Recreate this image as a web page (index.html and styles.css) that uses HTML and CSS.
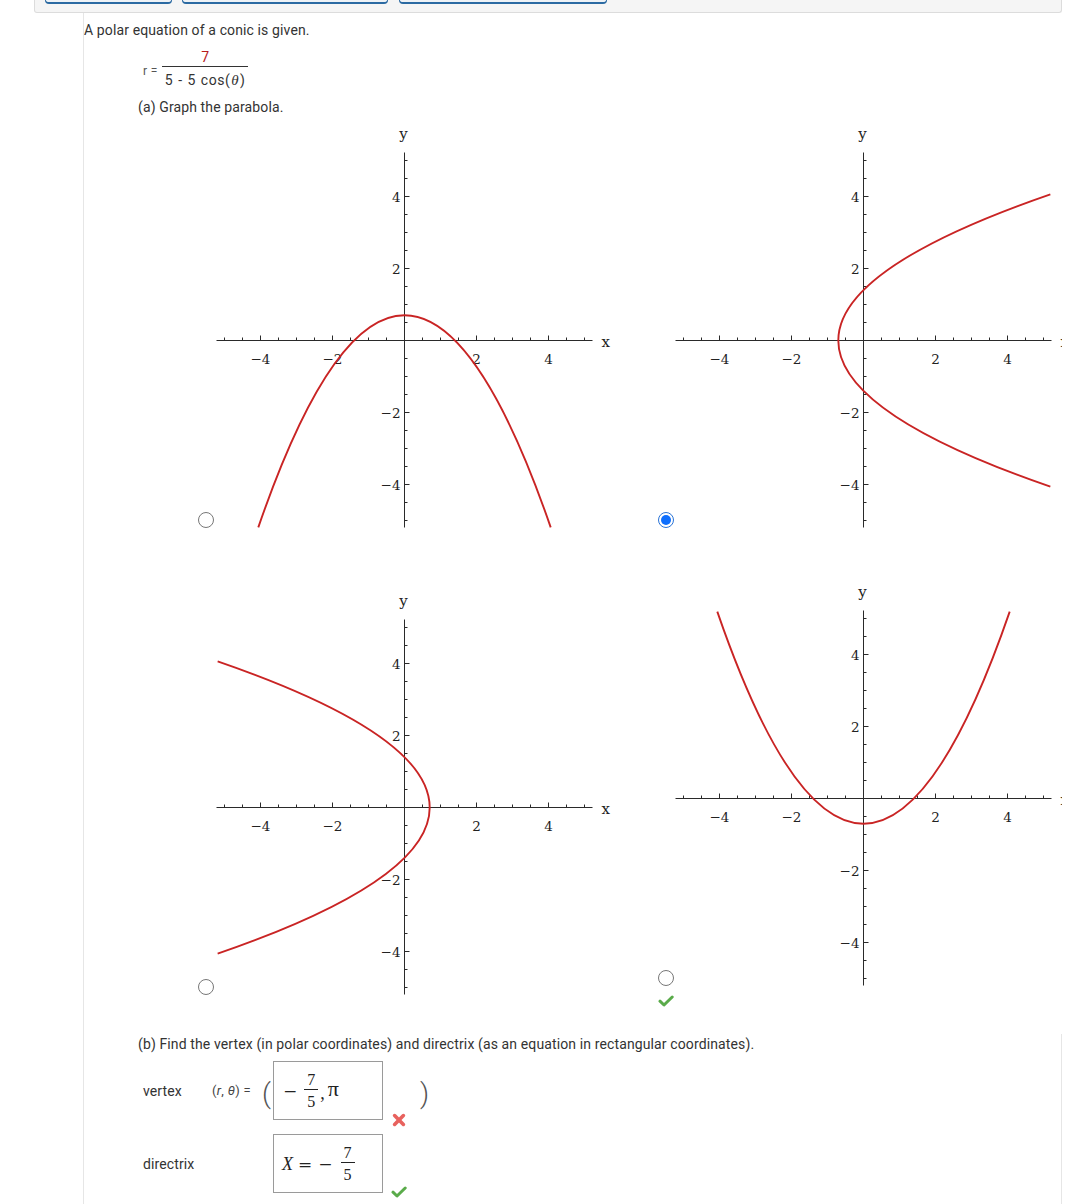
FILE: index.html
```html
<!DOCTYPE html>
<html lang="en">
<head>
<meta charset="utf-8">
<title>Polar conic</title>
<link rel="stylesheet" href="styles.css">
</head>
<body>
<div class="topbar">
  <span class="btn b1"></span><span class="btn b2"></span><span class="btn b3"></span>
</div>
<main class="question">
  <p class="intro">A polar equation of a conic is given.</p>
  <div class="formula">
    <span class="req"><i>r</i> =</span>
    <span class="frac-main"><span class="num">7</span><span class="den">5 - 5 cos(<i>θ</i>)</span></span>
  </div>
  <p class="part">(a) Graph the parabola.</p>

  <div class="graphs">
    <div class="graph-row">
      <div class="cell">
        <div class="choice">
          <span class="radio"></span>
          <svg class="plot" width="400" height="403" viewBox="0 0 400 403">
            <g transform="translate(189.5 215.5)">
              <path class="axis" d="M-188 0H188M0 -188V187"/>
              <path class="axis" d="M-180 0v-3M-162 0v-3M-144 0v-5M-126 0v-3M-108 0v-3M-90 0v-3M-72 0v-5M-54 0v-3M-36 0v-3M-18 0v-3M18 0v-3M36 0v-3M54 0v-3M72 0v-5M90 0v-3M108 0v-3M126 0v-3M144 0v-5M162 0v-3M180 0v-3"/>
              <path class="axis" d="M0 -180h3M0 -162h3M0 -144h5M0 -126h3M0 -108h3M0 -90h3M0 -72h5M0 -54h3M0 -36h3M0 -18h3M0 18h3M0 36h3M0 54h3M0 72h5M0 90h3M0 108h3M0 126h3M0 144h5M0 162h3M0 180h3"/>
              <g class="lbl">
                <text x="-144" y="23" text-anchor="middle">−4</text>
                <text x="-72" y="23" text-anchor="middle">−2</text>
                <text x="72" y="23" text-anchor="middle">2</text>
                <text x="144" y="23" text-anchor="middle">4</text>
                <text x="-4" y="-139" text-anchor="end">4</text>
                <text x="-4" y="-67" text-anchor="end">2</text>
                <text x="-4" y="77" text-anchor="end">−2</text>
                <text x="-4" y="149" text-anchor="end">−4</text>
              </g>
              <text class="axlbl" x="197" y="6">x</text>
              <text class="axlbl" x="-1" y="-202" text-anchor="middle">y</text>
              <path class="curve" d="M-146.2 186.85Q0 -237.25 146.2 186.85"/>
            </g>
          </svg>
        </div>
      </div>
      <div class="cell">
        <div class="choice">
          <span class="radio on"></span>
          <svg class="plot" width="400" height="403" viewBox="0 0 400 403">
            <g transform="translate(188.5 215.5)">
              <path class="axis" d="M-188 0H188M0 -188V187"/>
              <path class="axis" d="M-180 0v-3M-162 0v-3M-144 0v-5M-126 0v-3M-108 0v-3M-90 0v-3M-72 0v-5M-54 0v-3M-36 0v-3M-18 0v-3M18 0v-3M36 0v-3M54 0v-3M72 0v-5M90 0v-3M108 0v-3M126 0v-3M144 0v-5M162 0v-3M180 0v-3"/>
              <path class="axis" d="M0 -180h3M0 -162h3M0 -144h5M0 -126h3M0 -108h3M0 -90h3M0 -72h5M0 -54h3M0 -36h3M0 -18h3M0 18h3M0 36h3M0 54h3M0 72h5M0 90h3M0 108h3M0 126h3M0 144h5M0 162h3M0 180h3"/>
              <g class="lbl">
                <text x="-144" y="23" text-anchor="middle">−4</text>
                <text x="-72" y="23" text-anchor="middle">−2</text>
                <text x="72" y="23" text-anchor="middle">2</text>
                <text x="144" y="23" text-anchor="middle">4</text>
                <text x="-4" y="-139" text-anchor="end">4</text>
                <text x="-4" y="-67" text-anchor="end">2</text>
                <text x="-4" y="77" text-anchor="end">−2</text>
                <text x="-4" y="149" text-anchor="end">−4</text>
              </g>
              <text class="axlbl" x="197" y="6">x</text>
              <text class="axlbl" x="-1" y="-202" text-anchor="middle">y</text>
              <path class="curve" d="M186.85 -146.2Q-237.25 0 186.85 146.2"/>
            </g>
          </svg>
        </div>
      </div>
    </div>

    <div class="graph-row">
      <div class="cell">
        <div class="choice">
          <span class="radio"></span>
          <svg class="plot" width="400" height="403" viewBox="0 0 400 403">
            <g transform="translate(189.5 215.5)">
              <path class="axis" d="M-188 0H188M0 -188V187"/>
              <path class="axis" d="M-180 0v-3M-162 0v-3M-144 0v-5M-126 0v-3M-108 0v-3M-90 0v-3M-72 0v-5M-54 0v-3M-36 0v-3M-18 0v-3M18 0v-3M36 0v-3M54 0v-3M72 0v-5M90 0v-3M108 0v-3M126 0v-3M144 0v-5M162 0v-3M180 0v-3"/>
              <path class="axis" d="M0 -180h3M0 -162h3M0 -144h5M0 -126h3M0 -108h3M0 -90h3M0 -72h5M0 -54h3M0 -36h3M0 -18h3M0 18h3M0 36h3M0 54h3M0 72h5M0 90h3M0 108h3M0 126h3M0 144h5M0 162h3M0 180h3"/>
              <g class="lbl">
                <text x="-144" y="23" text-anchor="middle">−4</text>
                <text x="-72" y="23" text-anchor="middle">−2</text>
                <text x="72" y="23" text-anchor="middle">2</text>
                <text x="144" y="23" text-anchor="middle">4</text>
                <text x="-4" y="-139" text-anchor="end">4</text>
                <text x="-4" y="-67" text-anchor="end">2</text>
                <text x="-4" y="77" text-anchor="end">−2</text>
                <text x="-4" y="149" text-anchor="end">−4</text>
              </g>
              <text class="axlbl" x="197" y="6">x</text>
              <text class="axlbl" x="-1" y="-202" text-anchor="middle">y</text>
              <path class="curve" d="M-186.85 -146.2Q237.25 0 -186.85 146.2"/>
            </g>
          </svg>
        </div>
      </div>
      <div class="cell">
        <div class="choice">
          <span class="radio"></span>
          <svg class="plot" width="400" height="403" viewBox="0 0 400 403">
            <g transform="translate(188.5 215.5)">
              <path class="axis" d="M-188 0H188M0 -188V187"/>
              <path class="axis" d="M-180 0v-3M-162 0v-3M-144 0v-5M-126 0v-3M-108 0v-3M-90 0v-3M-72 0v-5M-54 0v-3M-36 0v-3M-18 0v-3M18 0v-3M36 0v-3M54 0v-3M72 0v-5M90 0v-3M108 0v-3M126 0v-3M144 0v-5M162 0v-3M180 0v-3"/>
              <path class="axis" d="M0 -180h3M0 -162h3M0 -144h5M0 -126h3M0 -108h3M0 -90h3M0 -72h5M0 -54h3M0 -36h3M0 -18h3M0 18h3M0 36h3M0 54h3M0 72h5M0 90h3M0 108h3M0 126h3M0 144h5M0 162h3M0 180h3"/>
              <g class="lbl">
                <text x="-144" y="23" text-anchor="middle">−4</text>
                <text x="-72" y="23" text-anchor="middle">−2</text>
                <text x="72" y="23" text-anchor="middle">2</text>
                <text x="144" y="23" text-anchor="middle">4</text>
                <text x="-4" y="-139" text-anchor="end">4</text>
                <text x="-4" y="-67" text-anchor="end">2</text>
                <text x="-4" y="77" text-anchor="end">−2</text>
                <text x="-4" y="149" text-anchor="end">−4</text>
              </g>
              <text class="axlbl" x="197" y="6">x</text>
              <text class="axlbl" x="-1" y="-202" text-anchor="middle">y</text>
              <path class="curve" d="M-146.2 -186.85Q0 237.25 146.2 -186.85"/>
            </g>
          </svg>
        </div>
        <div class="mark-row">
          <svg class="check" width="16" height="12" viewBox="0 0 16 12"><path d="M2 6.2L6 10L14.2 2" fill="none" stroke="#5aab4a" stroke-width="3" stroke-linecap="round" stroke-linejoin="round"/></svg>
        </div>
      </div>
    </div>
  </div>

  <section class="part-b">
    <p class="part">(b) Find the vertex (in polar coordinates) and directrix (as an equation in rectangular coordinates).</p>
    <div class="answers">
      <div class="ans-row">
        <span class="lab">vertex</span>
        <span class="eq">(<i>r</i>, <i>θ</i>) =</span>
        <span class="paren">(</span>
        <div class="box vbox">
          <span class="op minus1">−</span>
          <span class="frac"><span class="n">7</span><span class="d">5</span></span>
          <span class="comma">,</span><span class="pi">π</span>
        </div>
        <svg class="mark xmark" width="14" height="14" viewBox="0 0 14 14"><path d="M2.6 2.6L11.4 11.4M11.4 2.6L2.6 11.4" stroke="#e8625e" stroke-width="3.6" stroke-linecap="round"/></svg>
        <span class="paren rparen">)</span>
      </div>
      <div class="ans-row">
        <span class="lab wide">directrix</span>
        <div class="box dbox">
          <i class="var">X</i>
          <span class="op eqs">=</span>
          <span class="op minus2">−</span>
          <span class="frac"><span class="n">7</span><span class="d">5</span></span>
        </div>
        <svg class="mark cmark" width="16" height="12" viewBox="0 0 16 12"><path d="M2 6.2L6 10L14.2 2" fill="none" stroke="#5aab4a" stroke-width="3" stroke-linecap="round" stroke-linejoin="round"/></svg>
      </div>
    </div>
  </section>
</main>
</body>
</html>
```

FILE: styles.css
```css
* { box-sizing: border-box; }
html, body { margin: 0; padding: 0; background: #fff; }
body {
  font-family: Roboto, "Liberation Sans", Arial, sans-serif;
  font-size: 14px;
  letter-spacing: 0.12px;
  color: #333;
}

/* top toolbar remnant */
.topbar {
  margin-left: 34px;
  width: 1028px;
  height: 13px;
  background: #f5f5f5;
  border: 1px solid #dcdcdc;
  border-top: 0;
  border-radius: 0 0 3px 3px;
  display: flex;
  align-items: flex-start;
  gap: 10px;
  padding-left: 10px;
}
.btn {
  display: block;
  height: 4px;
  border: 1px solid #2b6aa2;
  border-top: 0;
  border-bottom-width: 2px;
  border-radius: 0 0 4px 4px;
  background: #eef2f6;
}
.b1 { width: 127px; }
.b2 { width: 206px; }
.b3 { width: 208px; margin-left: 1px; }

/* question body */
.question {
  margin-left: 83px;
  width: 979px;
  border-left: 1px solid #e6e6e6;
  overflow: hidden;
  padding-top: 7px;
}
.intro { margin: 0; line-height: 20px; }

.formula {
  display: flex;
  align-items: center;
  margin: 9px 0 0 59px;
}
.req {
  font-size: 12px;
  line-height: 12px;
  color: #555;
  margin: 5px 4px 0 0;
  letter-spacing: 0.4px;
}
.req i { font-style: normal; }
.frac-main {
  display: inline-flex;
  flex-direction: column;
  align-items: center;
}
.frac-main .num {
  color: #b71c1c;
  line-height: 16px;
  padding-bottom: 1px;
}
.frac-main .den {
  line-height: 16px;
  padding: 5px 3px 0;
  border-top: 1px solid #333;
  letter-spacing: 0.5px;
  word-spacing: 1px;
}
.frac-main .den i {
  font-family: "Liberation Serif", serif;
  font-size: 15px;
  margin: 0 1px;
}

.part { margin: 9px 0 0 54px; line-height: 20px; }

/* graphs */
.graphs {
  margin: 8px 0 0 114px;
  display: flex;
  flex-direction: column;
  gap: 55px;
}
.graph-row {
  display: flex;
  align-items: center;
  gap: 43px;
}
.cell {
  display: flex;
  flex-direction: column;
  flex: none;
  width: 417px;
}
.choice {
  display: flex;
  align-items: flex-end;
  gap: 1px;
}
.radio {
  flex: none;
  width: 16px;
  height: 16px;
  border-radius: 50%;
  border: 1px solid #777;
  background: #fff;
}
.radio.on {
  border-color: #2a73d6;
  display: flex;
  align-items: center;
  justify-content: center;
}
.radio.on::after {
  content: "";
  width: 10px;
  height: 10px;
  border-radius: 50%;
  background: #0d6efd;
}
.plot { display: block; flex: none; overflow: visible; letter-spacing: 0; }
.axis { fill: none; stroke: #2a2a2a; stroke-width: 1; }
.lbl text {
  font-family: "DejaVu Serif", "Liberation Serif", serif;
  font-size: 13.5px;
  fill: #222;
}
.axlbl {
  font-family: "DejaVu Serif", "Liberation Serif", serif;
  font-size: 15px;
  fill: #222;
}
.curve { fill: none; stroke: #c92424; stroke-width: 1.9; }

.mark-row { height: 18px; }
.mark-row .check { display: block; margin-top: 9px; }

/* part b */
.part-b {
  margin-top: 30px;
  border-right: 1px solid #e6e6e6;
  padding-bottom: 20px;
}
.part-b .part { margin-top: 0; }
.answers {
  margin: 7px 0 0 59px;
  display: flex;
  flex-direction: column;
  gap: 14px;
}
.ans-row { display: flex; align-items: center; }
.lab { flex: none; width: 69px; }
.lab.wide { width: 130px; }
.eq { flex: none; width: 50px; font-size: 13px; color: #444; letter-spacing: 0.3px; }
.paren {
  flex: none;
  width: 11px;
  font-size: 28px;
  font-weight: 300;
  line-height: 30px;
  color: #555;
  margin-top: 6px;
}
.rparen { margin-left: 14px; }
.box {
  flex: none;
  width: 110px;
  height: 59px;
  border: 1px solid #9a9a9a;
  display: flex;
  align-items: center;
  font-family: "Liberation Serif", "DejaVu Serif", serif;
  color: #222;
  letter-spacing: 0;
}
.vbox { padding-left: 9px; }
.dbox { padding-left: 8px; }
.op {
  font-family: "DejaVu Serif", serif;
  font-size: 17px;
  line-height: 20px;
}
.minus1 { margin-right: 7px; }
.frac {
  display: inline-flex;
  flex-direction: column;
  align-items: center;
  font-size: 16px;
}
.frac .n {
  line-height: 15px;
  padding: 0 3px 2px;
  border-bottom: 1px solid #222;
}
.frac .d { line-height: 15px; padding-top: 4px; }
.comma { font-size: 18px; line-height: 18px; margin: 4px 0 0 2px; }
.pi { font-size: 22px; line-height: 22px; margin: -4px 0 0 3px; }
.var { font-size: 18px; line-height: 20px; margin-right: 5px; }
.eqs { margin-right: 6px; }
.minus2 { margin-right: 8px; }
.mark { flex: none; align-self: flex-end; display: block; }
.xmark { margin: 0 0 -7px 9px; }
.cmark { margin: 0 0 -5px 8px; }
```
